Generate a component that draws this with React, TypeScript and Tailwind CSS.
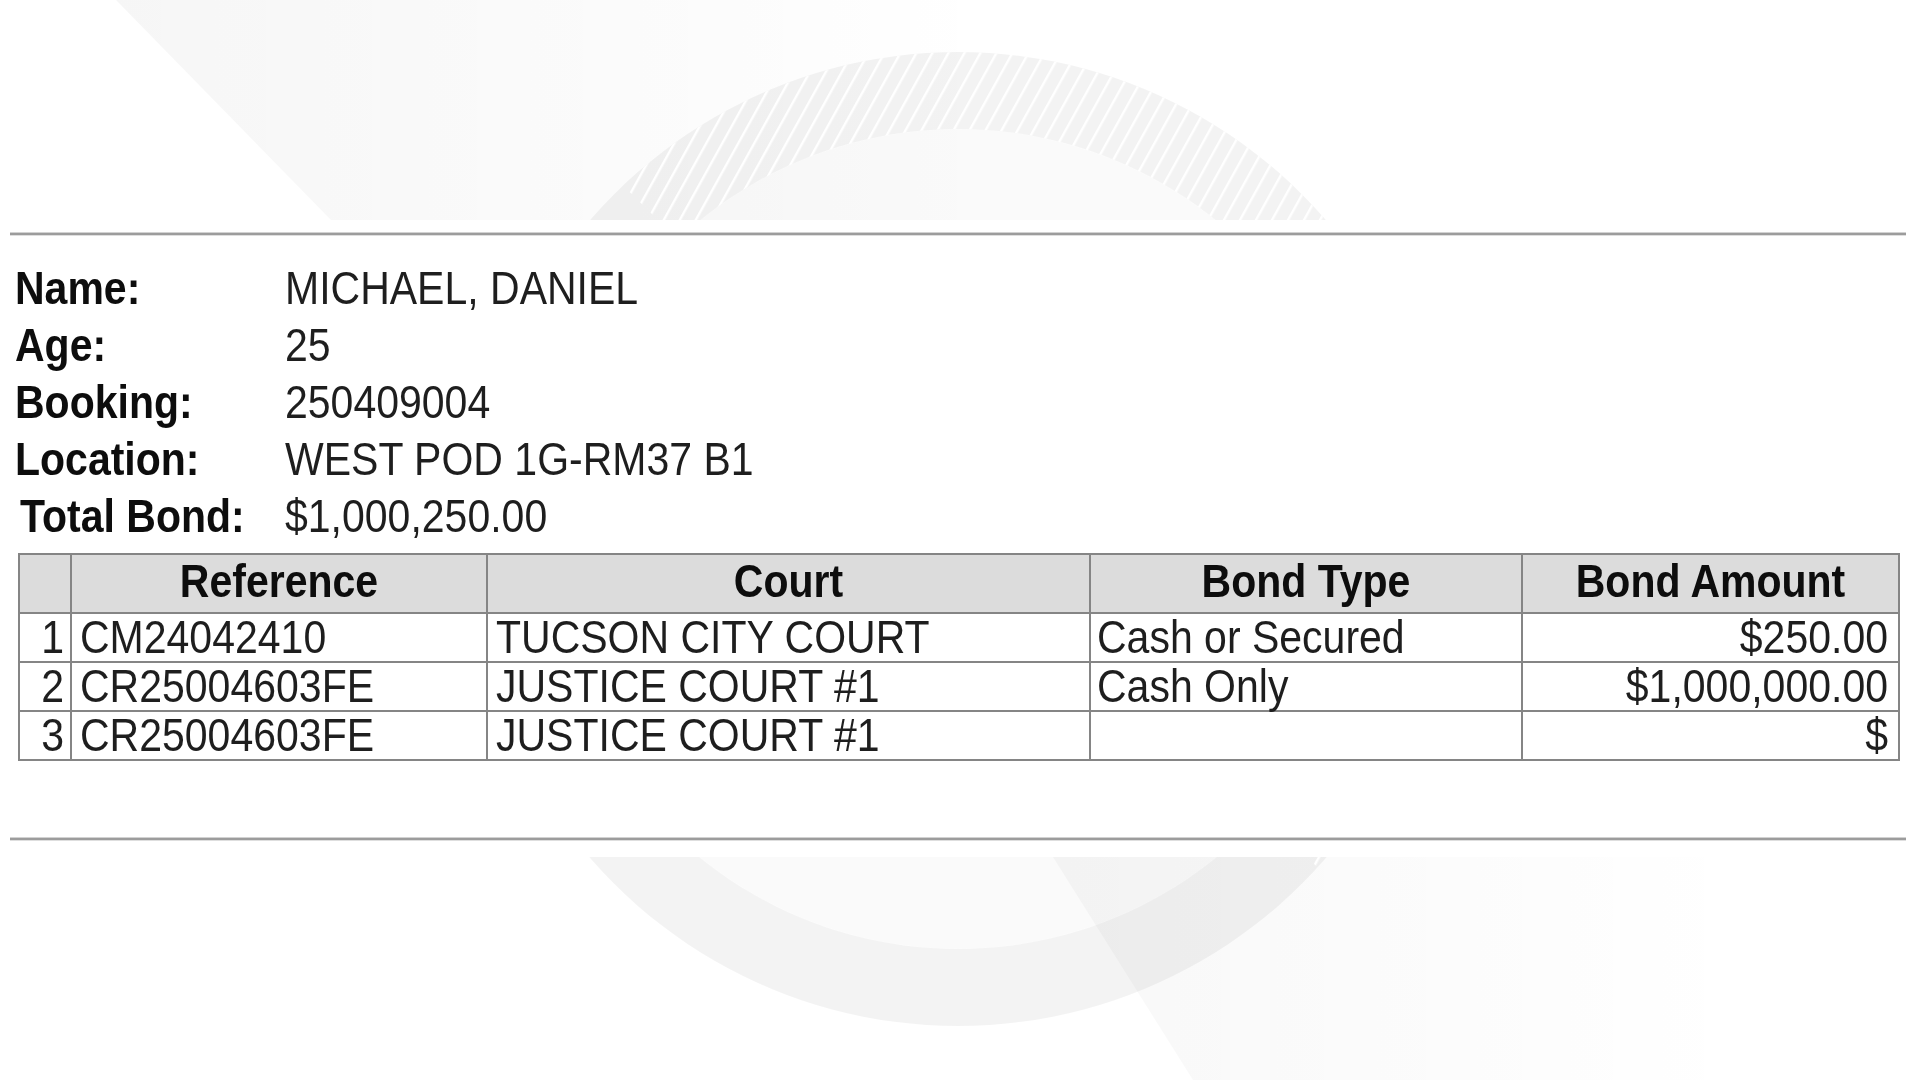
import React from "react";

const FONT = { fontFamily: '"Liberation Sans", Arial, sans-serif' } as const;

function Watermark() {
  return (
    <svg
      className="absolute inset-0 h-full w-full"
      width="1920"
      height="1080"
      viewBox="0 0 1920 1080"
      aria-hidden="true"
    >
      <defs>
        <linearGradient id="bandTop" x1="116" y1="0" x2="1000" y2="0" gradientUnits="userSpaceOnUse">
          <stop offset="0" stopColor="#000" stopOpacity="0.035" />
          <stop offset="0.7" stopColor="#000" stopOpacity="0.012" />
          <stop offset="1" stopColor="#000" stopOpacity="0" />
        </linearGradient>
        <linearGradient id="bandBottom" x1="1053" y1="0" x2="1750" y2="0" gradientUnits="userSpaceOnUse">
          <stop offset="0" stopColor="#000" stopOpacity="0.028" />
          <stop offset="0.6" stopColor="#000" stopOpacity="0.012" />
          <stop offset="1" stopColor="#000" stopOpacity="0" />
        </linearGradient>
        <pattern
          id="hatch"
          patternUnits="userSpaceOnUse"
          width="14"
          height="14"
          patternTransform="rotate(29)"
        >
          <rect x="0" y="0" width="2.4" height="14" fill="#fff" />
        </pattern>
        <clipPath id="hatchClip">
          <polygon points="434,0 1920,0 1920,1080 1534,1080" />
        </clipPath>
        <mask id="ringMask">
          <rect x="0" y="0" width="1920" height="1080" fill="#000" />
          <circle cx="958" cy="539" r="487" fill="#fff" />
          <circle cx="958" cy="539" r="410" fill="#000" />
        </mask>
      </defs>
      <polygon points="116,0 1000,0 1000,220 331,220" fill="url(#bandTop)" />
      <polygon points="1053,857 1920,857 1920,1080 1193,1080" fill="url(#bandBottom)" />
      <path
        d="M958 52 a487 487 0 1 0 0.01 0 Z M958 129 a410 410 0 1 1 -0.01 0 Z"
        fill="#000"
        fillOpacity="0.048"
        fillRule="evenodd"
      />
      <circle cx="958" cy="539" r="410" fill="#000" fillOpacity="0.02" />
      <g mask="url(#ringMask)" clipPath="url(#hatchClip)">
        <rect x="0" y="0" width="1920" height="1080" fill="url(#hatch)" />
      </g>
    </svg>
  );
}

function Rule() {
  return (
    <div className="mx-[10px] w-[1896px]">
      <div className="h-px bg-[#d2d2d2]" />
      <div className="h-[2px] bg-[#9c9c9c]" />
      <div className="h-px bg-[#dedede]" />
    </div>
  );
}

function T({ children }: { children: React.ReactNode }) {
  return <span className="inline-block scale-y-[1.12]">{children}</span>;
}

const info: { label: string; value: string; indent?: boolean }[] = [
  { label: "Name:", value: "MICHAEL, DANIEL" },
  { label: "Age:", value: "25" },
  { label: "Booking:", value: "250409004" },
  { label: "Location:", value: "WEST POD 1G-RM37 B1" },
  { label: "Total Bond:", value: "$1,000,250.00", indent: true },
];

const rows = [
  { n: "1", ref: "CM24042410", court: "TUCSON CITY COURT", type: "Cash or Secured", amount: "$250.00" },
  { n: "2", ref: "CR25004603FE", court: "JUSTICE COURT #1", type: "Cash Only", amount: "$1,000,000.00" },
  { n: "3", ref: "CR25004603FE", court: "JUSTICE COURT #1", type: "", amount: "$" },
];

export default function App() {
  return (
    <div className="relative h-[1080px] w-[1920px] overflow-hidden bg-white" style={FONT}>
      <Watermark />
      <div className="relative flex flex-col">
        <div className="h-[220px]" />
        <div className="flex h-[637px] flex-col bg-white pt-[12px]">
          <Rule />
          <div className="mt-[24px] flex flex-col pl-[15px]">
            {info.map((r) => (
              <div key={r.label} className="flex h-[57px] items-center text-[41px] leading-none">
                <div
                  className={
                    r.indent
                      ? "w-[270px] pl-[5px] font-bold text-[#0d0d0d]"
                      : "w-[270px] font-bold text-[#0d0d0d]"
                  }
                >
                  <T>{r.label}</T>
                </div>
                <div className="text-[#1e1e1e]">
                  <T>{r.value}</T>
                </div>
              </div>
            ))}
          </div>
          <table className="mt-[8px] ml-[18px] w-[1880px] table-fixed border-collapse text-[41px] leading-[1.15]">
            <colgroup>
              <col className="w-[52px]" />
              <col className="w-[416px]" />
              <col className="w-[603px]" />
              <col className="w-[432px]" />
              <col className="w-[377px]" />
            </colgroup>
            <thead>
              <tr className="h-[59px] bg-[#dcdcdc]">
                <th className="border-2 border-[#858585]" />
                <th className="border-2 border-[#858585] pb-[3px] text-center font-bold text-[#0d0d0d]"><T>Reference</T></th>
                <th className="border-2 border-[#858585] pb-[3px] text-center font-bold text-[#0d0d0d]"><T>Court</T></th>
                <th className="border-2 border-[#858585] pb-[3px] text-center font-bold text-[#0d0d0d]"><T>Bond Type</T></th>
                <th className="border-2 border-[#858585] pb-[3px] text-center font-bold text-[#0d0d0d]"><T>Bond Amount</T></th>
              </tr>
            </thead>
            <tbody>
              {rows.map((r) => (
                <tr key={r.n} className="h-[49px] text-[#1e1e1e]">
                  <td className="border-2 border-[#858585] pr-[6px] text-right"><T>{r.n}</T></td>
                  <td className="border-2 border-[#858585] px-[8px] text-left"><T>{r.ref}</T></td>
                  <td className="border-2 border-[#858585] px-[8px] text-left"><T>{r.court}</T></td>
                  <td className="border-2 border-[#858585] px-[6px] text-left"><T>{r.type}</T></td>
                  <td className="border-2 border-[#858585] pr-[10px] text-right"><T>{r.amount}</T></td>
                </tr>
              ))}
            </tbody>
          </table>
          <div className="mt-auto pb-[16px]">
            <Rule />
          </div>
        </div>
      </div>
    </div>
  );
}
